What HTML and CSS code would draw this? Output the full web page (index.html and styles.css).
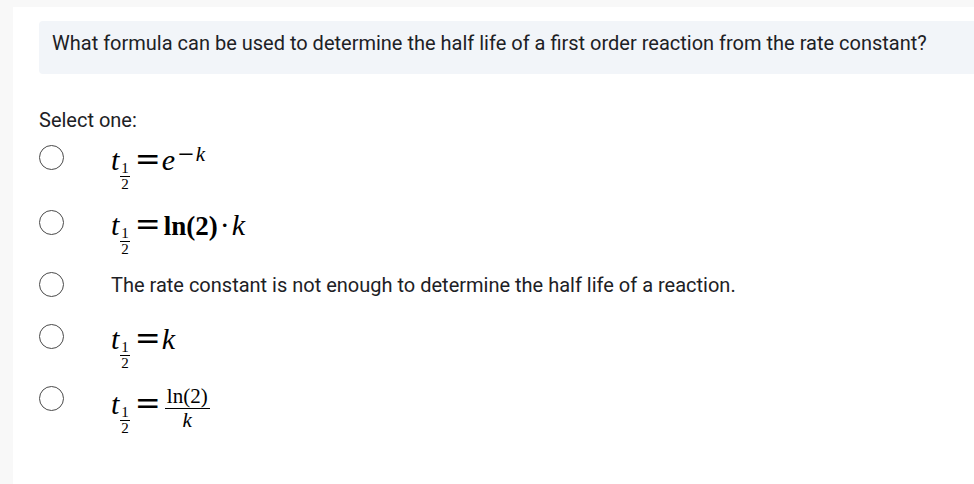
FILE: index.html
```html
<!DOCTYPE html>
<html lang="en">
<head>
<meta charset="utf-8">
<title>Question</title>
<link rel="stylesheet" href="styles.css">
</head>
<body>
<div class="card">
  <div class="qtext">What formula can be used to determine the half life of a first order reaction from the rate constant?</div>
  <div class="prompt">Select one:</div>
  <div class="answers">
    <div class="option math-row first">
      <span class="radio"></span>
      <span class="label">
        <span class="math">
          <span class="mi">t</span><span class="frac sub"><span class="num">1</span><span class="den">2</span></span><span class="mo">=</span><span class="mi">e</span><span class="sup"><span class="minus">−</span><span class="mi">k</span></span>
        </span>
      </span>
    </div>
    <div class="option math-row">
      <span class="radio"></span>
      <span class="label">
        <span class="math">
          <span class="mi">t</span><span class="frac sub"><span class="num">1</span><span class="den">2</span></span><span class="mo">=</span><span class="mn bold">ln(2)</span><span class="dot">·</span><span class="mi">k</span>
        </span>
      </span>
    </div>
    <div class="option text-row">
      <span class="radio"></span>
      <span class="label text">The rate constant is not enough to determine the half life of a reaction.</span>
    </div>
    <div class="option math-row">
      <span class="radio"></span>
      <span class="label">
        <span class="math">
          <span class="mi">t</span><span class="frac sub"><span class="num">1</span><span class="den">2</span></span><span class="mo">=</span><span class="mi">k</span>
        </span>
      </span>
    </div>
    <div class="option math-row">
      <span class="radio"></span>
      <span class="label">
        <span class="math low">
          <span class="mi">t</span><span class="frac sub"><span class="num">1</span><span class="den">2</span></span><span class="mo">=</span><span class="frac big"><span class="num">ln(2)</span><span class="den"><span class="mi">k</span></span></span>
        </span>
      </span>
    </div>
  </div>
</div>
</body>
</html>
```

FILE: styles.css
```css
html, body {
  margin: 0;
  padding: 0;
}
body {
  background: #f8f8f8;
  font-family: Roboto, "Liberation Sans", sans-serif;
  color: #1d2125;
  width: 974px;
  height: 484px;
  overflow: hidden;
}
.card {
  margin: 7px 0 0 13px;
  background: #ffffff;
  height: 477px;
  padding: 14px 0 0 26px;
  box-sizing: border-box;
}
.qtext {
  background: #f2f5f9;
  border-radius: 4px 0 0 4px;
  padding: 10px 13px 18px 13px;
  font-size: 20px;
  line-height: 25px;
  white-space: nowrap;
}
.prompt {
  margin-top: 34px;
  font-size: 20px;
  line-height: 25px;
}
.answers {
  margin-top: 12px;
  display: flex;
  flex-direction: column;
}
.option {
  display: flex;
  align-items: flex-start;
}
.math-row {
  height: 62px;
}
.math-row.first {
  height: 65px;
}
.text-row {
  height: 52px;
}
.radio {
  width: 25px;
  height: 25px;
  box-sizing: border-box;
  border: 1.5px solid #4a4a4a;
  border-radius: 50%;
  flex: none;
}
.label {
  margin-left: 47px;
}
.label.text {
  font-size: 20px;
  line-height: 25px;
  margin-top: 1px;
}
.math {
  display: inline-flex;
  align-items: baseline;
  font-family: "Liberation Serif", "DejaVu Serif", serif;
  font-size: 30px;
  line-height: 1;
  color: #000;
  margin-top: -1px;
}
.math.low {
  margin-top: 2px;
}
.mi {
  font-style: italic;
}
.mo {
  font-family: "DejaVu Serif", serif;
  font-size: 31px;
  margin: 0 1px 0 5px;
}
.frac {
  display: inline-flex;
  flex-direction: column;
  align-items: center;
}
.frac .num {
  border-bottom: 1px solid #000;
  line-height: 1;
}
.frac .den {
  line-height: 1;
}
.frac.sub {
  font-size: 15px;
  position: relative;
  top: 3px;
  margin-left: 1px;
}
.frac.sub .num {
  padding: 0 1px;
  line-height: 0.9;
}
.frac.sub .den {
  padding-top: 1px;
  line-height: 0.9;
}
.frac.big {
  font-size: 21px;
  position: relative;
  top: -11px;
  margin-left: 3px;
}
.frac.big .num {
  padding: 0 2px 1px;
}
.frac.big .den {
  padding-top: 1px;
}
.sup {
  font-size: 21px;
  position: relative;
  top: -9px;
  margin-left: 2px;
}
.minus {
  font-family: "DejaVu Serif", serif;
  margin-right: 1px;
}
.bold {
  font-weight: bold;
  font-size: 27px;
  margin-left: 2px;
}
.dot {
  margin: 0 2px;
}
```
